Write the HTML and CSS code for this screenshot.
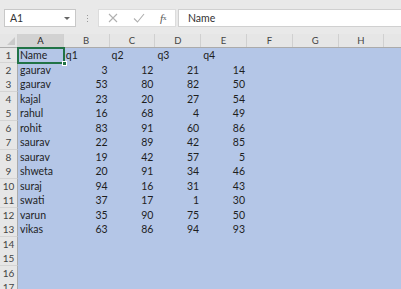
FILE: index.html
```html
<!DOCTYPE html>
<html>
<head>
<meta charset="utf-8">
<link rel="stylesheet" href="styles.css">
</head>
<body>
<div class="app">
  <div class="toolbar">
    <div class="namebox"><span class="nb-text">A1</span><span class="nb-arrow"></span></div>
    <div class="dots"><i></i><i></i><i></i></div>
    <div class="fxbox">
      <span class="btn cancel">
        <svg width="10" height="10" viewBox="0 0 10 10"><path d="M1 1L9 9M9 1L1 9" stroke="#b0b0b0" stroke-width="1.1" fill="none"/></svg>
      </span>
      <span class="btn enter">
        <svg width="12" height="10" viewBox="0 0 12 10"><path d="M1 5.5L4.5 9L11 1" stroke="#b0b0b0" stroke-width="1.1" fill="none"/></svg>
      </span>
      <span class="btn fx"><i>f</i><sub>x</sub></span>
    </div>
    <div class="formula">Name</div>
  </div>
  <div class="sheet">
    <div class="row head">
      <div class="corner"><span class="tri"></span></div>
      <div class="ch active">A</div><div class="ch">B</div><div class="ch">C</div><div class="ch">D</div><div class="ch">E</div><div class="ch">F</div><div class="ch">G</div><div class="ch">H</div><div class="ch last"></div>
    </div>
    <div class="row"><div class="rh">1</div><div class="c sel">Name<span class="cursor"><span class="handle"></span></span></div><div class="c">q1</div><div class="c">q2</div><div class="c">q3</div><div class="c">q4</div><div class="c"></div><div class="c"></div><div class="c"></div><div class="c"></div></div>
    <div class="row"><div class="rh">2</div><div class="c">gaurav</div><div class="c n">3</div><div class="c n">12</div><div class="c n">21</div><div class="c n">14</div><div class="c"></div><div class="c"></div><div class="c"></div><div class="c"></div></div>
    <div class="row"><div class="rh">3</div><div class="c">gaurav</div><div class="c n">53</div><div class="c n">80</div><div class="c n">82</div><div class="c n">50</div><div class="c"></div><div class="c"></div><div class="c"></div><div class="c"></div></div>
    <div class="row"><div class="rh">4</div><div class="c">kajal</div><div class="c n">23</div><div class="c n">20</div><div class="c n">27</div><div class="c n">54</div><div class="c"></div><div class="c"></div><div class="c"></div><div class="c"></div></div>
    <div class="row"><div class="rh">5</div><div class="c">rahul</div><div class="c n">16</div><div class="c n">68</div><div class="c n">4</div><div class="c n">49</div><div class="c"></div><div class="c"></div><div class="c"></div><div class="c"></div></div>
    <div class="row"><div class="rh">6</div><div class="c">rohit</div><div class="c n">83</div><div class="c n">91</div><div class="c n">60</div><div class="c n">86</div><div class="c"></div><div class="c"></div><div class="c"></div><div class="c"></div></div>
    <div class="row"><div class="rh">7</div><div class="c">saurav</div><div class="c n">22</div><div class="c n">89</div><div class="c n">42</div><div class="c n">85</div><div class="c"></div><div class="c"></div><div class="c"></div><div class="c"></div></div>
    <div class="row"><div class="rh">8</div><div class="c">saurav</div><div class="c n">19</div><div class="c n">42</div><div class="c n">57</div><div class="c n">5</div><div class="c"></div><div class="c"></div><div class="c"></div><div class="c"></div></div>
    <div class="row"><div class="rh">9</div><div class="c">shweta</div><div class="c n">20</div><div class="c n">91</div><div class="c n">34</div><div class="c n">46</div><div class="c"></div><div class="c"></div><div class="c"></div><div class="c"></div></div>
    <div class="row"><div class="rh">10</div><div class="c">suraj</div><div class="c n">94</div><div class="c n">16</div><div class="c n">31</div><div class="c n">43</div><div class="c"></div><div class="c"></div><div class="c"></div><div class="c"></div></div>
    <div class="row"><div class="rh">11</div><div class="c">swati</div><div class="c n">37</div><div class="c n">17</div><div class="c n">1</div><div class="c n">30</div><div class="c"></div><div class="c"></div><div class="c"></div><div class="c"></div></div>
    <div class="row"><div class="rh">12</div><div class="c">varun</div><div class="c n">35</div><div class="c n">90</div><div class="c n">75</div><div class="c n">50</div><div class="c"></div><div class="c"></div><div class="c"></div><div class="c"></div></div>
    <div class="row"><div class="rh">13</div><div class="c">vikas</div><div class="c n">63</div><div class="c n">86</div><div class="c n">94</div><div class="c n">93</div><div class="c"></div><div class="c"></div><div class="c"></div><div class="c"></div></div>
    <div class="row"><div class="rh">14</div><div class="c"></div><div class="c"></div><div class="c"></div><div class="c"></div><div class="c"></div><div class="c"></div><div class="c"></div><div class="c"></div><div class="c"></div></div>
    <div class="row"><div class="rh">15</div><div class="c"></div><div class="c"></div><div class="c"></div><div class="c"></div><div class="c"></div><div class="c"></div><div class="c"></div><div class="c"></div><div class="c"></div></div>
    <div class="row"><div class="rh">16</div><div class="c"></div><div class="c"></div><div class="c"></div><div class="c"></div><div class="c"></div><div class="c"></div><div class="c"></div><div class="c"></div><div class="c"></div></div>
    <div class="row"><div class="rh">17</div><div class="c"></div><div class="c"></div><div class="c"></div><div class="c"></div><div class="c"></div><div class="c"></div><div class="c"></div><div class="c"></div><div class="c"></div></div>
  </div>
</div>
</body>
</html>
```
FILE: styles.css
```css
html, body {
  margin: 0;
  padding: 0;
  width: 401px;
  height: 289px;
  overflow: hidden;
  background: #e9e9e9;
  font-family: "Lato", "Liberation Sans", sans-serif;
}
.app {
  display: flex;
  flex-direction: column;
  height: 289px;
}
.toolbar {
  flex: 0 0 34px;
  height: 34px;
  box-sizing: border-box;
  padding: 9px 0 7px 4px;
  display: flex;
  align-items: stretch;
  background: #e9e9e9;
}
.namebox {
  width: 72px;
  box-sizing: border-box;
  background: #fff;
  border: 1px solid #c8c8c8;
  display: flex;
  align-items: center;
  justify-content: space-between;
  padding: 0 5px 0 5px;
  font-size: 10.5px;
  color: #333;
}
.nb-arrow {
  width: 0;
  height: 0;
  border-left: 3px solid transparent;
  border-right: 3px solid transparent;
  border-top: 3px solid #666;
}
.dots {
  width: 22px;
  display: flex;
  flex-direction: column;
  align-items: center;
  justify-content: center;
  gap: 2px;
}
.dots i {
  width: 1px;
  height: 1px;
  background: #9a9a9a;
}
.fxbox {
  width: 78px;
  box-sizing: border-box;
  background: #fff;
  border: 1px solid #dcdcdc;
  display: flex;
  align-items: center;
  padding-left: 9px;
}
.btn {
  display: flex;
  align-items: center;
  justify-content: center;
}
.cancel { width: 10px; }
.enter { width: 12px; margin-left: 15px; }
.fx {
  margin-left: 15px;
  font-family: "Liberation Serif", serif;
  color: #555;
  font-size: 11px;
}
.fx sub { font-size: 7px; font-style: normal; }
.formula {
  flex: 1;
  margin-left: 2px;
  background: #fff;
  border: 1px solid #d0d0d0;
  border-right: none;
  box-sizing: border-box;
  padding-left: 9px;
  display: flex;
  align-items: center;
  font-size: 10.5px;
  color: #333;
}
.sheet {
  flex: 1 1 auto;
  min-height: 0;
  overflow: hidden;
  background: #b4c6e7;
}
.row {
  display: grid;
  grid-template-columns: 18px repeat(8, 45.8px) 1fr;
  height: 14.5px;
}
.row.head {
  height: 14px;
  background: #e6e6e6;
  border-bottom: 1px solid #ababab;
  box-sizing: border-box;
}
.corner {
  position: relative;
  background: #e6e6e6;
  border-right: 1px solid #d0d0d0;
}
.tri {
  position: absolute;
  right: 2px;
  bottom: 2px;
  width: 0;
  height: 0;
  border-left: 8px solid transparent;
  border-bottom: 8px solid #c9c9c9;
}
.ch {
  border-right: 1px solid #d0d0d0;
  font-size: 9.5px;
  color: #444;
  text-align: center;
  line-height: 13px;
}
.ch.active {
  background: #d2d2d2;
  color: #222;
}
.ch.last { border-right: none; }
.rh {
  background: #e6e6e6;
  border-right: 1px solid #ababab;
  border-bottom: 1px solid #d4d4d4;
  box-sizing: border-box;
  font-size: 10px;
  color: #444;
  text-align: center;
  line-height: 14px;
}
.c {
  font-size: 10.5px;
  color: #1e1e1e;
  line-height: 14.5px;
  padding: 0 2px;
  white-space: nowrap;
  overflow: visible;
}
.c.n { text-align: right; }
.c.sel { position: relative; }
.cursor {
  position: absolute;
  left: -1px;
  top: -1px;
  right: -1px;
  bottom: -1px;
  border: 2px solid #217346;
  box-sizing: border-box;
}
.handle {
  position: absolute;
  right: -4px;
  bottom: -4px;
  width: 5px;
  height: 5px;
  background: #217346;
  border: 1px solid #fff;
  box-sizing: border-box;
}
```
